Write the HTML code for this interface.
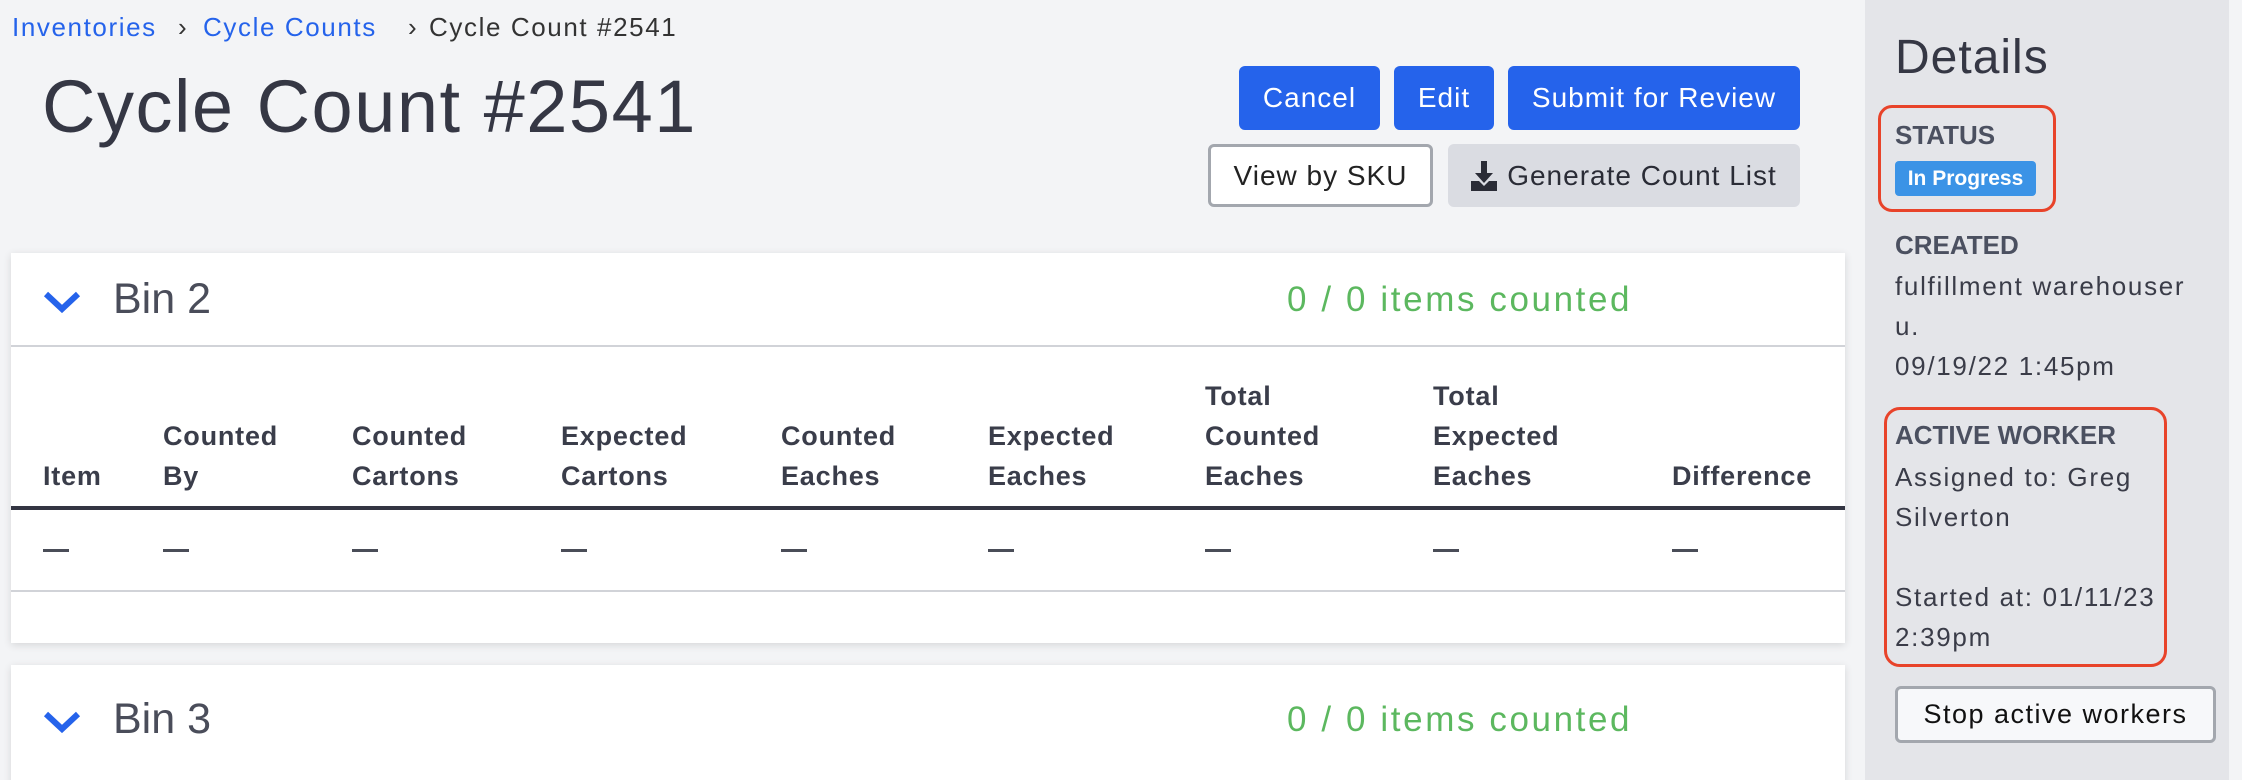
<!DOCTYPE html>
<html><head><meta charset="utf-8"><style>
*{margin:0;padding:0;box-sizing:border-box}
html,body{width:2242px;height:780px;overflow:hidden}
body{background:#f3f4f6;font-family:"Liberation Sans",sans-serif;color:#3a3c48;position:relative}
.a{position:absolute;white-space:nowrap}
.bc{top:12px;font-size:26px;letter-spacing:1.6px}
.blue{color:#2563eb}
.btn{position:absolute;border-radius:6px;font-size:28px;display:flex;align-items:center;justify-content:center;letter-spacing:1px}
.pb{background:#2563eb;color:#fff}
.card{position:absolute;left:11px;width:1834px;background:#fff;box-shadow:0 2px 8px rgba(0,0,0,.12)}
.th{position:absolute;font-size:27px;font-weight:bold;color:#3a3d4a;line-height:40px;top:376px;letter-spacing:0.8px}
.dash{position:absolute;top:549px;width:26px;height:3px;background:#4a4d58}
.side{position:absolute;left:1865px;top:0;width:364px;height:780px;background:#e4e5e9}
.lbl{font-size:26px;font-weight:bold;color:#4b5060}
.st{font-size:26px;color:#3a3c48;letter-spacing:1.7px}
.grn{font-size:35px;color:#5cb85f;letter-spacing:2.6px}
</style></head><body>
<div class="a bc blue" style="left:12px">Inventories</div>
<div class="a bc" style="left:178px;color:#333">›</div>
<div class="a bc blue" style="left:203px">Cycle Counts</div>
<div class="a bc" style="left:408px;color:#333">›</div>
<div class="a bc" style="left:429px;color:#333">Cycle Count #2541</div>
<div class="a" style="left:42px;top:64px;font-size:74px;color:#353744;letter-spacing:1.5px">Cycle Count #2541</div>

<div class="btn pb" style="left:1239px;top:66px;width:141px;height:64px">Cancel</div>
<div class="btn pb" style="left:1394px;top:66px;width:100px;height:64px">Edit</div>
<div class="btn pb" style="left:1508px;top:66px;width:292px;height:64px">Submit for Review</div>
<div class="btn" style="left:1208px;top:144px;width:225px;height:63px;border:3px solid #a3a7ae;background:#fff;color:#222">View by SKU</div>
<div class="btn" style="left:1448px;top:144px;width:352px;height:63px;background:#dadce2;color:#2a2c36"><svg width="26" height="30" viewBox="0 0 26 30" style="margin-right:10px"><path d="M10 0h6v12h6l-9 10-9-10h6z" fill="#2a2c36"/><path d="M0 20h8l5 5 5-5h8v10H0z" fill="#2a2c36"/></svg>Generate Count List</div>

<div class="card" style="top:253px;height:390px">
 <svg class="a" style="left:32px;top:38px" width="38" height="22" viewBox="0 0 38 22"><path d="M3 3l16 15L35 3" fill="none" stroke="#2563eb" stroke-width="6"/></svg>
 <div class="a" style="left:102px;top:22px;font-size:43px;color:#4a4d5a">Bin 2</div>
 <div class="a grn" style="left:1276px;top:27px">0 / 0 items counted</div>
 <div class="a" style="left:0;top:92px;width:1834px;height:2px;background:#d1d3d8"></div>
 <div class="a" style="left:0;top:253px;width:1834px;height:4px;background:#333542"></div>
 <div class="a" style="left:0;top:337px;width:1834px;height:2px;background:#d1d3d8"></div>
</div>
<div class="th" style="left:43px;top:456px">Item</div>
<div class="th" style="left:163px;top:416px">Counted<br>By</div>
<div class="th" style="left:352px;top:416px">Counted<br>Cartons</div>
<div class="th" style="left:561px;top:416px">Expected<br>Cartons</div>
<div class="th" style="left:781px;top:416px">Counted<br>Eaches</div>
<div class="th" style="left:988px;top:416px">Expected<br>Eaches</div>
<div class="th" style="left:1205px">Total<br>Counted<br>Eaches</div>
<div class="th" style="left:1433px">Total<br>Expected<br>Eaches</div>
<div class="th" style="left:1672px;top:456px">Difference</div>
<div class="dash" style="left:43px"></div><div class="dash" style="left:163px"></div><div class="dash" style="left:352px"></div><div class="dash" style="left:561px"></div><div class="dash" style="left:781px"></div><div class="dash" style="left:988px"></div><div class="dash" style="left:1205px"></div><div class="dash" style="left:1433px"></div><div class="dash" style="left:1672px"></div>

<div class="card" style="top:665px;height:140px">
 <svg class="a" style="left:32px;top:46px" width="38" height="22" viewBox="0 0 38 22"><path d="M3 3l16 15L35 3" fill="none" stroke="#2563eb" stroke-width="6"/></svg>
 <div class="a" style="left:102px;top:30px;font-size:43px;color:#4a4d5a">Bin 3</div>
 <div class="a grn" style="left:1276px;top:35px">0 / 0 items counted</div>
</div>

<div class="side"></div>
<div class="a" style="left:1895px;top:30px;font-size:48px;color:#353744;letter-spacing:1px">Details</div>
<div class="a" style="left:1878px;top:105px;width:178px;height:107px;border:3px solid #e8432a;border-radius:14px"></div>
<div class="a lbl" style="left:1895px;top:120px">STATUS</div>
<div class="a" style="left:1895px;top:161px;width:141px;height:35px;background:#3b93e6;color:#fff;border-radius:4px;font-size:21px;font-weight:bold;text-align:center;line-height:35px">In Progress</div>
<div class="a lbl" style="left:1895px;top:230px">CREATED</div>
<div class="a st" style="left:1895px;top:266px;line-height:40px">fulfillment warehouser<br>u.<br>09/19/22 1:45pm</div>
<div class="a" style="left:1884px;top:407px;width:283px;height:260px;border:3px solid #e8432a;border-radius:16px"></div>
<div class="a lbl" style="left:1895px;top:420px">ACTIVE WORKER</div>
<div class="a st" style="left:1895px;top:457px;line-height:40px">Assigned to: Greg<br>Silverton<br><br>Started at: 01/11/23<br>2:39pm</div>
<div class="btn" style="left:1895px;top:686px;width:321px;height:57px;border:3px solid #a3a7ae;background:#f7f8fa;color:#111;font-size:27px;letter-spacing:1.5px">Stop active workers</div>
</body></html>
